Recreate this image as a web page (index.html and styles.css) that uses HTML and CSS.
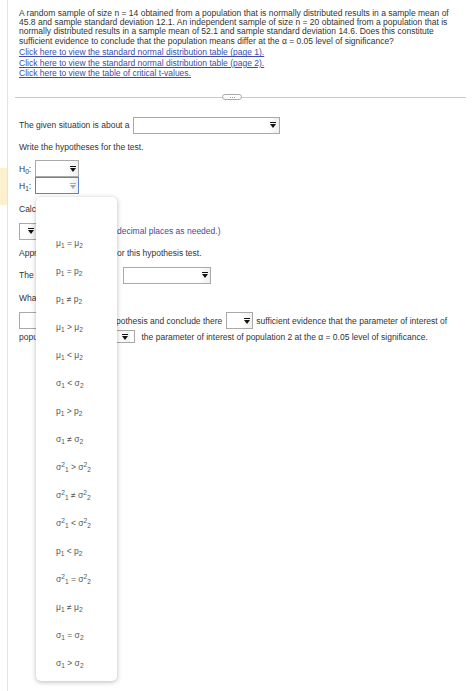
FILE: index.html
```html
<!DOCTYPE html>
<html>
<head>
<meta charset="utf-8">
<link rel="stylesheet" href="styles.css">
</head>
<body>
<div class="page">
  <div class="gutter"><div class="mark"></div></div>
  <div class="main">
    <p class="q">A random sample of size n = 14 obtained from a population that is normally distributed results in a sample mean of<br>45.8 and sample standard deviation 12.1. An independent sample of size n = 20 obtained from a population that is<br>normally distributed results in a sample mean of 52.1 and sample standard deviation 14.6. Does this constitute<br>sufficient evidence to conclude that the population means differ at the α = 0.05 level of significance?</p>
    <div class="links">
      <a href="#">Click here to view the standard normal distribution table (page 1).</a>
      <a href="#">Click here to view the standard normal distribution table (page 2).</a>
      <a href="#">Click here to view the table of critical t-values.</a>
    </div>
    <div class="sep"><span class="rule rule-l"></span><span class="pill"><i></i><i></i><i></i></span><span class="rule"></span></div>

    <div class="row r-about">
      <span class="t-about">The given situation is about a</span>
      <span class="sel sel-about"><span class="arr"><svg width="6" height="6" viewBox="0 0 6 6"><rect x="0" y="0" width="6" height="1" fill="#111"/><polygon points="0,2 6,2 3,6" fill="#111"/></svg></span></span>
    </div>

    <p class="line l-write">Write the hypotheses for the test.</p>

    <div class="hyp">
      <div class="hrow">
        <span class="hlab">H<sub>0</sub>:</span>
        <span class="sel sel-h"><span class="arr"><svg width="6" height="6" viewBox="0 0 6 6"><rect x="0" y="0" width="6" height="1" fill="#111"/><polygon points="0,2 6,2 3,6" fill="#111"/></svg></span></span>
      </div>
      <div class="hrow">
        <span class="hlab">H<sub>1</sub>:</span>
        <span class="sel sel-h focus"><span class="arr"><svg width="6" height="6" viewBox="0 0 6 6"><rect x="0" y="0" width="6" height="1" fill="#aaa"/><polygon points="0,2 6,2 3,6" fill="#aaa"/></svg></span></span>
        <ul class="menu">
          <li class="blank"></li>
          <li>μ<sub>1</sub> = μ<sub>2</sub></li>
          <li>p<sub>1</sub> = p<sub>2</sub></li>
          <li>p<sub>1</sub> ≠ p<sub>2</sub></li>
          <li>μ<sub>1</sub> &gt; μ<sub>2</sub></li>
          <li>μ<sub>1</sub> &lt; μ<sub>2</sub></li>
          <li>σ<sub>1</sub> &lt; σ<sub>2</sub></li>
          <li>p<sub>1</sub> &gt; p<sub>2</sub></li>
          <li>σ<sub>1</sub> ≠ σ<sub>2</sub></li>
          <li>σ<sup>2</sup><sub>1</sub> &gt; σ<sup>2</sup><sub>2</sub></li>
          <li>σ<sup>2</sup><sub>1</sub> ≠ σ<sup>2</sup><sub>2</sub></li>
          <li>σ<sup>2</sup><sub>1</sub> &lt; σ<sup>2</sup><sub>2</sub></li>
          <li>p<sub>1</sub> &lt; p<sub>2</sub></li>
          <li>σ<sup>2</sup><sub>1</sub> = σ<sup>2</sup><sub>2</sub></li>
          <li>μ<sub>1</sub> ≠ μ<sub>2</sub></li>
          <li>σ<sub>1</sub> = σ<sub>2</sub></li>
          <li>σ<sub>1</sub> &gt; σ<sub>2</sub></li>
        </ul>
      </div>
    </div>

    <p class="line l-calc"><span class="cov">Calc</span></p>

    <div class="row r-stat">
      <span class="sel sel-s"><span class="arr"><svg width="6" height="6" viewBox="0 0 6 6"><rect x="0" y="0" width="6" height="1" fill="#111"/><polygon points="0,2 6,2 3,6" fill="#111"/></svg></span></span>
      <span class="gap gap80"></span>
      <span class="note">decimal places as needed.)</span>
    </div>

    <p class="line l-appr"><span class="cov">Appr</span><span class="gap gap81"></span>or this hypothesis test.</p>

    <div class="row r-pval">
      <span class="cov">The</span>
      <span class="gap gap83"></span>
      <span class="sel sel-p"><span class="arr"><svg width="6" height="6" viewBox="0 0 6 6"><rect x="0" y="0" width="6" height="1" fill="#111"/><polygon points="0,2 6,2 3,6" fill="#111"/></svg></span></span>
    </div>

    <p class="line l-what"><span class="cov">Wha</span></p>

    <div class="row r-concl">
      <span class="sel sel-r"></span>
      <span class="gap gap56"></span>
      <span>pothesis and conclude there</span>
      <span class="sel sel-is"><span class="arr"><svg width="6" height="6" viewBox="0 0 6 6"><rect x="0" y="0" width="6" height="1" fill="#111"/><polygon points="0,2 6,2 3,6" fill="#111"/></svg></span></span>
      <span class="t-suff">sufficient evidence that the parameter of interest of</span>
    </div>
    <div class="row r-pop">
      <span class="cov">popu</span>
      <span class="gap gap68"></span>
      <span class="sel sel-cmp"><span class="arr"><svg width="6" height="6" viewBox="0 0 6 6"><rect x="0" y="0" width="6" height="1" fill="#111"/><polygon points="0,2 6,2 3,6" fill="#111"/></svg></span></span>
      <span class="t-pop">the parameter of interest of population 2 at the α = 0.05 level of significance.</span>
    </div>
  </div>
</div>
</body>
</html>
```
FILE: styles.css
```css
html, body {
  margin: 0;
  padding: 0;
  background: #fff;
}
body {
  font-family: "Liberation Sans", Arial, sans-serif;
  font-size: 8.5px;
  color: #333;
}
.page {
  display: flex;
  min-height: 691px;
}
.gutter {
  width: 7px;
  flex: none;
}
.mark {
  margin-top: 168px;
  height: 37px;
  background: #fcf1cd;
}
.main {
  flex: 1;
  min-width: 0;
  border-left: 1px solid #e3e3e3;
  padding: 9px 8px 0 11px;
}
.q {
  margin: 0;
  line-height: 9.2px;
  white-space: nowrap;
}
.links {
  margin-top: 1.5px;
  line-height: 10.5px;
}
.links a {
  display: block;
  width: max-content;
  color: #3b4cb0;
  text-decoration: underline;
}
.sep {
  display: flex;
  align-items: center;
  height: 7px;
  margin: 15px 0 0 -4px;
}
.rule {
  flex: 1;
  height: 1px;
  background: #c9c9c9;
}
.rule-l {
  flex: none;
  width: 207px;
}
.pill {
  flex: none;
  width: 20px;
  height: 6px;
  box-sizing: border-box;
  border: 1px solid #a9a9a9;
  border-radius: 3px;
  display: flex;
  align-items: center;
  justify-content: center;
  gap: 1px;
}
.pill i {
  width: 1px;
  height: 1px;
  background: #999;
}
.row {
  display: flex;
  align-items: center;
  white-space: nowrap;
}
.line {
  margin: 0;
  line-height: 10px;
  white-space: nowrap;
}
.sel {
  flex: none;
  box-sizing: border-box;
  height: 17px;
  border: 1px solid #a9a9a9;
  background: #fff;
  display: flex;
  align-items: stretch;
  justify-content: flex-end;
}
.arr {
  width: 11px;
  display: flex;
  align-items: center;
  justify-content: center;
  background: linear-gradient(to right, #fff, #efefef);
}
.arr svg {
  display: block;
}
/* words that run under the open menu: only the part left of the menu shows */
.cov {
  display: inline-block;
  flex: none;
  width: 17px;
  overflow: visible;
  white-space: nowrap;
  vertical-align: top;
}
.gap {
  display: inline-block;
  flex: none;
}
.gap80 { width: 80px; }
.gap81 { width: 81px; }
.gap83 { width: 83px; }
.gap56 { width: 56px; }
.gap68 { width: 68px; }

.r-about {
  margin-top: 16px;
  height: 17px;
}
.t-about {
  width: 113.5px;
}
.sel-about {
  width: 147px;
}
.l-write {
  margin-top: 8px;
}
.hyp {
  margin-top: 8.3px;
}
.hrow {
  display: flex;
  align-items: center;
  height: 17px;
  position: relative;
}
.hlab {
  width: 16px;
}
.hlab sub, .menu sub {
  font-size: 78%;
  line-height: 0;
  vertical-align: -2px;
}
.menu sup {
  font-size: 78%;
  line-height: 0;
  vertical-align: 3px;
}
.sel-h {
  width: 44px;
}
.focus {
  border-color: #5b80d6;
}
.menu {
  position: absolute;
  left: 17px;
  top: 20px;
  width: 81px;
  height: 484px;
  box-sizing: border-box;
  margin: 0;
  padding: 4px 0;
  list-style: none;
  background: #fff;
  border-radius: 5px;
  box-shadow: 0 1px 5px rgba(0, 0, 0, 0.28);
  z-index: 5;
}
.menu li {
  height: 28px;
  line-height: 28px;
  padding-left: 20px;
  color: #555;
  white-space: nowrap;
}
.l-calc {
  margin-top: 10.3px;
}
.r-stat {
  margin-top: 8.3px;
  height: 17px;
}
.sel-s {
  width: 18px;
}
.note {
  color: #464a9a;
}
.l-appr {
  margin-top: 8.2px;
}
.r-pval {
  margin-top: 9px;
  height: 17px;
}
.sel-p {
  width: 88px;
  margin-left: 4px;
}
.l-what {
  margin-top: 8.7px;
}
.r-concl {
  margin-top: 9.7px;
  height: 17px;
}
.sel-r {
  width: 41px;
}
.sel-is {
  width: 27px;
  margin-left: 4px;
}
.t-suff {
  margin-left: 3px;
}
.r-pop {
  margin-top: 1px;
  height: 13px;
}
.sel-cmp {
  width: 31px;
  height: 13px;
  padding-right: 4px;
}
.t-pop {
  margin-left: 6.5px;
}
```
